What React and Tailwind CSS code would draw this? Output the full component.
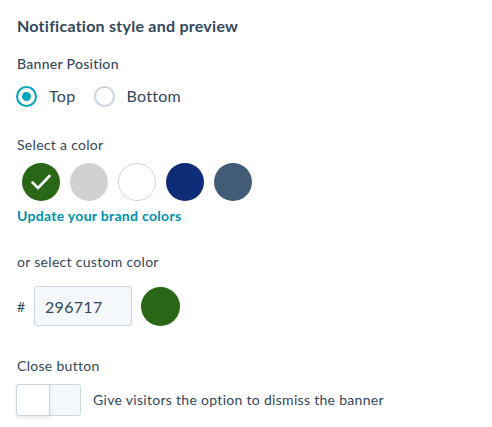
import { useState } from "react";

const swatches = ["#296717", "#d1d1d1", "#ffffff", "#0f2c79", "#425b76"];

export default function App() {
  const [position, setPosition] = useState("top");
  const [selected, setSelected] = useState(0);

  return (
    <div
      className="w-[492px] h-[427px] bg-white px-[17px] pt-[14px] text-[#33475b] tracking-[0.3px]"
      style={{ fontFamily: "Lato, 'Open Sans', sans-serif" }}
    >
      <h2 className="text-[16px] font-bold leading-[24px] tracking-[0.25px]">Notification style and preview</h2>

      {/* Banner position */}
      <div className="mt-[16px] text-[14px] font-medium leading-[20px]">Banner Position</div>
      <div className="mt-[11px] flex items-center text-[16px] leading-[22px]">
        <label className="flex items-center cursor-pointer" onClick={() => setPosition("top")}>
          <span
            className={`w-[21px] h-[21px] rounded-full border-2 flex items-center justify-center -ml-[1px] ${
              position === "top" ? "border-[#00a4bd]" : "border-[#cbd6e2]"
            }`}
          >
            {position === "top" && <span className="w-[9px] h-[9px] rounded-full bg-[#00a4bd]" />}
          </span>
          <span className="ml-[12px]">Top</span>
        </label>
        <label className="flex items-center cursor-pointer ml-[19px]" onClick={() => setPosition("bottom")}>
          <span
            className={`w-[21px] h-[21px] rounded-full border-2 flex items-center justify-center ${
              position === "bottom" ? "border-[#00a4bd]" : "border-[#cbd6e2]"
            }`}
          >
            {position === "bottom" && <span className="w-[9px] h-[9px] rounded-full bg-[#00a4bd]" />}
          </span>
          <span className="ml-[11px]">Bottom</span>
        </label>
      </div>

      {/* Colors */}
      <div className="mt-[28px] text-[14px] leading-[20px]">Select a color</div>
      <div className="mt-[8px] flex gap-[10px] pl-[5px]">
        {swatches.map((c, i) => (
          <button
            key={c}
            onClick={() => setSelected(i)}
            className={`w-[38px] h-[38px] rounded-full flex items-center justify-center ${
              c === "#ffffff" ? "border border-[#cbd6e2]" : ""
            }`}
            style={{ backgroundColor: c }}
          >
            {selected === i && (
              <svg width="22" height="18" viewBox="0 0 22 18" fill="none">
                <path d="M2.5 9.5l5.5 5.5L19.5 3" stroke="white" strokeWidth="2.6" strokeLinecap="round" strokeLinejoin="round" />
              </svg>
            )}
          </button>
        ))}
      </div>
      <a href="#" className="block mt-[5px] text-[14px] font-bold leading-[20px] text-[#0091ae]">
        Update your brand colors
      </a>

      <div className="mt-[26px] text-[14px] leading-[20px]">or select custom color</div>
      <div className="mt-[14px] flex items-center">
        <span className="text-[14px] w-[17px]">#</span>
        <input
          defaultValue="296717"
          className="w-[98px] h-[40px] rounded-[3px] border border-[#cbd6e2] bg-[#f5f8fa] px-[10px] text-[16px] text-[#33475b] tracking-[0.3px] outline-none"
        />
        <span className="ml-[9px] w-[39px] h-[39px] rounded-full bg-[#296717]" />
      </div>

      {/* Close button */}
      <div className="mt-[30px] text-[14px] leading-[20px]">Close button</div>
      <div className="mt-[8px] flex items-center -ml-[1px]">
        <div className="relative w-[65px] h-[32px] rounded-[3px] border border-[#cbd6e2] bg-[#f5f8fa]">
          <span className="absolute -left-px -top-px w-[34px] h-[32px] rounded-[3px] border border-[#cbd6e2] bg-white shadow-[0_2px_4px_rgba(45,62,80,0.12)]" />
        </div>
        <span className="ml-[12px] text-[14px] leading-[20px]">Give visitors the option to dismiss the banner</span>
      </div>
    </div>
  );
}
